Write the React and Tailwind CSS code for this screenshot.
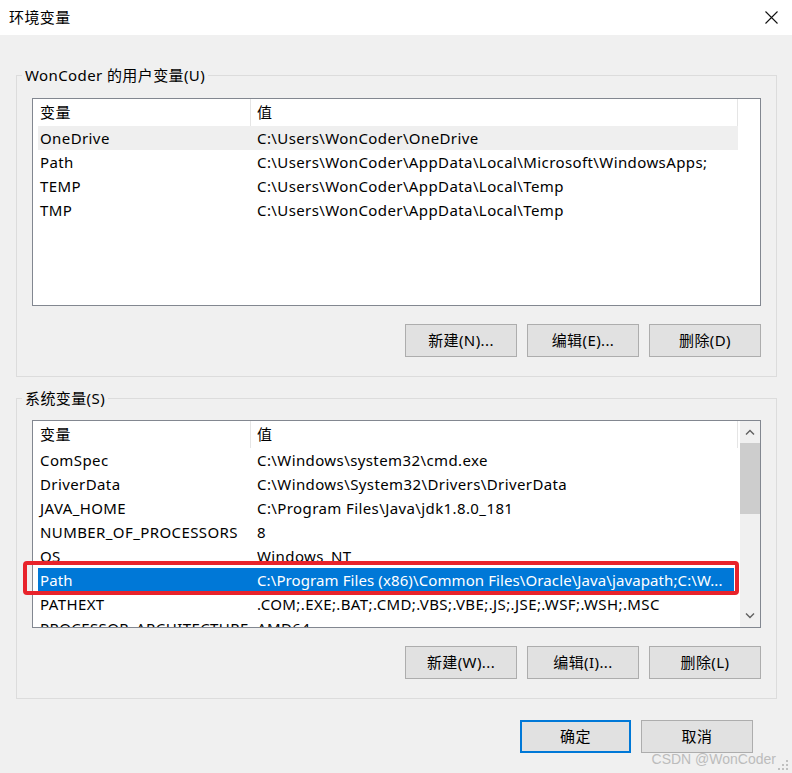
import React from "react";

const userVars = [
  ["OneDrive", "C:\\Users\\WonCoder\\OneDrive"],
  ["Path", "C:\\Users\\WonCoder\\AppData\\Local\\Microsoft\\WindowsApps;"],
  ["TEMP", "C:\\Users\\WonCoder\\AppData\\Local\\Temp"],
  ["TMP", "C:\\Users\\WonCoder\\AppData\\Local\\Temp"],
];

const sysVars = [
  ["ComSpec", "C:\\Windows\\system32\\cmd.exe"],
  ["DriverData", "C:\\Windows\\System32\\Drivers\\DriverData"],
  ["JAVA_HOME", "C:\\Program Files\\Java\\jdk1.8.0_181"],
  ["NUMBER_OF_PROCESSORS", "8"],
  ["OS", "Windows_NT"],
  ["Path", "C:\\Program Files (x86)\\Common Files\\Oracle\\Java\\javapath;C:\\W..."],
  ["PATHEXT", ".COM;.EXE;.BAT;.CMD;.VBS;.VBE;.JS;.JSE;.WSF;.WSH;.MSC"],
  ["PROCESSOR_ARCHITECTURE", "AMD64"],
];

const Button = ({ children, primary }) => (
  <button
    className={
      primary
        ? "w-[111px] h-[33px] shrink-0 bg-[#e1e1e1] border-2 border-[#0078d7] text-[15px] text-black"
        : "w-[112px] h-[33px] shrink-0 bg-[#e1e1e1] border border-[#adadad] text-[15px] text-black"
    }
  >
    {children}
  </button>
);

const Chevron = ({ down }) => (
  <svg width="10" height="6" viewBox="0 0 10 6" className={down ? "rotate-180" : ""}>
    <path d="M1 5.5 L5 1.5 L9 5.5" fill="none" stroke="#606060" strokeWidth="1.4" />
  </svg>
);

const VarList = ({ rows, selected, hovered, scroll }) => (
  <div className="relative">
    <div className="h-[208px] w-full border border-[#828790] bg-white flex overflow-hidden">
      <div className="flex-1 flex flex-col min-w-0">
        <div className="h-[27px] shrink-0 flex items-center">
          <div className="w-[218px] pl-[7px] h-full flex items-center border-r border-[#e5e5e5]">变量</div>
          <div className="flex-1 pl-[6px] h-full flex items-center border-r border-[#e5e5e5]">值</div>
          <div className={scroll ? "w-[2px]" : "w-[22px]"}></div>
        </div>
        {rows.map(([name, value], i) => (
          <div
            key={name + i}
            className={
              "h-[24px] shrink-0 min-w-0 flex items-center ml-[5px] whitespace-nowrap " +
              (scroll ? "mr-[6px] " : "mr-[22px] ") +
              (i === selected ? "bg-[#0078d7] text-white tracking-[0.1px]" : i === hovered ? "bg-[#efefef]" : "")
            }
          >
            <div className="w-[219px] shrink-0 pl-[2px] overflow-hidden">{name}</div>
            <div className="flex-1 min-w-0 overflow-hidden">{value}</div>
          </div>
        ))}
      </div>
      {scroll && (
        <div className="w-[20px] shrink-0 bg-[#f0f0f0] flex flex-col items-center">
          <div className="h-[22px] w-full flex items-center justify-center">
            <Chevron />
          </div>
          <div className="w-full h-[71px] bg-[#cdcdcd]"></div>
          <div className="flex-1"></div>
          <div className="h-[22px] w-full flex items-center justify-center">
            <Chevron down />
          </div>
        </div>
      )}
    </div>
    {scroll && (
      <div className="absolute left-[-9px] top-[141px] w-[716px] h-[34px] border-4 border-[#e8232b] rounded-[4px]"></div>
    )}
  </div>
);

const Group = ({ label, children, className }) => (
  <fieldset className={"ml-[16px] w-[761px] min-w-0 border border-[#dcdcdc] pl-[15px] pr-[15px] pb-[19px] " + className}>
    <legend className="-ml-[10px] px-[3px] h-[20px] leading-[20px]">{label}</legend>
    {children}
  </fieldset>
);

export default function App() {
  return (
    <div className="relative w-[792px] h-[773px] bg-[#f0f0f0] flex flex-col overflow-hidden text-[15px] tracking-[0.4px] text-black font-['Noto_Sans','Noto_Sans_CJK_SC',sans-serif]">
      <div className="h-[35px] bg-white flex items-center justify-between pl-[9px] pr-[14px] shrink-0">
        <span>环境变量</span>
        <svg width="13" height="13" viewBox="0 0 13 13">
          <path d="M0.5 0.5 L12.5 12.5 M12.5 0.5 L0.5 12.5" stroke="#111" strokeWidth="1.1" />
        </svg>
      </div>

      <Group label="WonCoder 的用户变量(U)" className="mt-[30px]">
        <div className="mt-[13px]">
          <VarList rows={userVars} hovered={0} />
        </div>
        <div className="mt-[18px] flex justify-end gap-[10px]">
          <Button>新建(N)...</Button>
          <Button>编辑(E)...</Button>
          <Button>删除(D)</Button>
        </div>
      </Group>

      <Group label="系统变量(S)" className="mt-[11px]">
        <div className="mt-[12px]">
          <VarList rows={sysVars} selected={5} scroll />
        </div>
        <div className="mt-[18px] flex justify-end gap-[10px]">
          <Button>新建(W)...</Button>
          <Button>编辑(I)...</Button>
          <Button>删除(L)</Button>
        </div>
      </Group>

      <div className="mt-[21px] flex justify-end gap-[10px] pr-[39px]">
        <Button primary>确定</Button>
        <Button>取消</Button>
      </div>

      <div className="absolute right-[16px] bottom-[6px] text-[14px] leading-[16px] tracking-normal text-[#bcbcbc] font-['Liberation_Sans',sans-serif]">
        CSDN @WonCoder
      </div>
      <svg className="absolute right-[2px] bottom-[1px]" width="12" height="12" viewBox="0 0 12 12">
        <g fill="#c0c0c0">
          <rect x="8" y="0" width="2" height="2" />
          <rect x="4" y="4" width="2" height="2" />
          <rect x="8" y="4" width="2" height="2" />
          <rect x="0" y="8" width="2" height="2" />
          <rect x="4" y="8" width="2" height="2" />
          <rect x="8" y="8" width="2" height="2" />
        </g>
      </svg>
    </div>
  );
}
